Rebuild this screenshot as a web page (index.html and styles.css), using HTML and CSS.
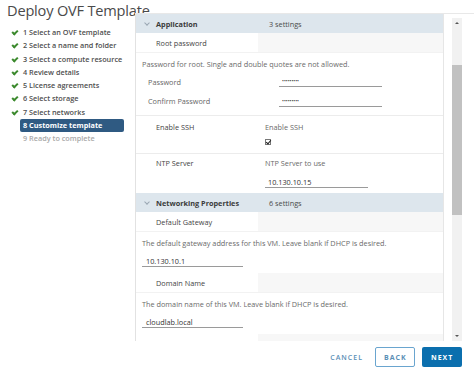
FILE: index.html
```html
<!DOCTYPE html>
<html lang="en">
<head>
  <meta charset="UTF-8">
  <link rel="stylesheet" href="styles.css">
</head>
<body>
  <div class="wizard">
    <div class="main">
      <div class="side">
        <h1 class="title">Deploy OVF Template</h1>
        <ul class="steps">
          <li class="step done"><span class="tick"></span>1 Select an OVF template</li>
          <li class="step done"><span class="tick"></span>2 Select a name and folder</li>
          <li class="step done"><span class="tick"></span>3 Select a compute resource</li>
          <li class="step done"><span class="tick"></span>4 Review details</li>
          <li class="step done"><span class="tick"></span>5 License agreements</li>
          <li class="step done"><span class="tick"></span>6 Select storage</li>
          <li class="step done"><span class="tick"></span>7 Select networks</li>
          <li class="step active">8 Customize template</li>
          <li class="step todo">9 Ready to complete</li>
        </ul>
      </div>
      <div class="panel">
        <div class="props">
          <div class="group">
            <span class="chev"></span>
            <span class="group-name">Application</span>
            <span class="group-count">3 settings</span>
          </div>
          <div class="prop-head">
            <span class="prop-name">Root password</span>
            <span class="prop-side"></span>
          </div>
          <p class="desc">Password for root. Single and double quotes are not allowed.</p>
          <div class="pw-row">
            <span class="pw-label">Password</span>
            <span class="field pw">•••••••••</span>
          </div>
          <div class="pw-row last">
            <span class="pw-label">Confirm Password</span>
            <span class="field pw">•••••••••</span>
          </div>

          <div class="prop ssh">
            <span class="prop-name">Enable SSH</span>
            <div class="prop-side">
              <div class="side-text">Enable SSH</div>
              <span class="check"></span>
            </div>
          </div>
          <div class="prop ntp">
            <span class="prop-name">NTP Server</span>
            <div class="prop-side">
              <div class="side-text">NTP Server to use</div>
              <span class="field">10.130.10.15</span>
            </div>
          </div>

          <div class="group">
            <span class="chev"></span>
            <span class="group-name">Networking Properties</span>
            <span class="group-count">6 settings</span>
          </div>
          <div class="prop-head">
            <span class="prop-name">Default Gateway</span>
            <span class="prop-side"></span>
          </div>
          <p class="desc">The default gateway address for this VM. Leave blank if DHCP is desired.</p>
          <div class="value-row"><span class="field">10.130.10.1</span></div>
          <div class="prop-head">
            <span class="prop-name">Domain Name</span>
            <span class="prop-side"></span>
          </div>
          <p class="desc">The domain name of this VM. Leave blank if DHCP is desired.</p>
          <div class="value-row"><span class="field">cloudlab.local</span></div>
          <div class="prop-head">
            <span class="prop-name">Domain Search Path</span>
            <span class="prop-side"></span>
          </div>
        </div>
        <div class="scrollbar">
          <span class="arrow up"></span>
          <div class="track"><div class="thumb"></div></div>
          <span class="arrow down"></span>
        </div>
      </div>
    </div>
    <div class="footer">
      <button class="btn link">CANCEL</button>
      <button class="btn outline">BACK</button>
      <button class="btn primary">NEXT</button>
    </div>
  </div>
</body>
</html>
```

FILE: styles.css
```css
* {
  margin: 0;
  padding: 0;
  box-sizing: border-box;
}
html, body {
  height: 100%;
  background-color: #fff;
}
body {
  font-family: "Open Sans", "Liberation Sans", sans-serif;
  font-size: 7.3px;
  color: #565656;
}
.wizard {
  height: 377px;
  display: flex;
  flex-direction: column;
}
.main {
  display: flex;
  height: 341px;
}
/* left column: title and steps */
.side {
  width: 135px;
}
.title {
  height: 26px;
  padding: 1px 0 0 7px;
  font-size: 14.6px;
  font-weight: 400;
  line-height: 18px;
  letter-spacing: -0.2px;
  color: #4a4a4a;
  white-space: nowrap;
}
.steps {
  list-style: none;
}
.step {
  position: relative;
  height: 13.3px;
  line-height: 13.3px;
  padding-left: 23px;
  font-weight: 600;
  color: #4f4f4f;
  white-space: nowrap;
}
.tick {
  position: absolute;
  left: 12px;
  top: 4px;
  width: 6px;
  height: 4px;
  border-left: 2px solid #3c8a2e;
  border-bottom: 2px solid #3c8a2e;
  transform: rotate(-45deg);
}
.step.active {
  margin-left: 20px;
  margin-right: 11px;
  padding-left: 3px;
  border-radius: 2px;
  background-color: #2f5a82;
  color: #fff;
  font-weight: 700;
}
.step.todo {
  color: #a9a9a9;
}
/* property panel */
.panel {
  flex: 1;
  display: flex;
  margin-top: 13px;
  border-left: 1px solid #e2e2e2;
  border-top: 1px solid #e8e8e8;
  overflow: hidden;
}
.props {
  width: 308px;
  border-right: 1px solid #e6e6e6;
}
.group {
  display: flex;
  align-items: center;
  height: 19px;
  background-color: #dde6ed;
  color: #3b3b3b;
}
.chev {
  width: 4px;
  height: 4px;
  margin: 0 7px 2px 9px;
  border-right: 1px solid #9aa7b2;
  border-bottom: 1px solid #9aa7b2;
  transform: rotate(45deg);
}
.group-name {
  width: 113px;
  font-weight: 700;
}
.group-count {
  color: #4a4a4a;
}
.prop-head {
  display: flex;
  height: 20px;
  align-items: center;
  border-bottom: 1px solid #f2f2f2;
}
.prop-name {
  width: 122px;
  padding-left: 20px;
  color: #444;
  font-weight: 500;
  align-self: flex-start;
}
.prop-head .prop-name {
  align-self: center;
}
.prop-head .prop-side {
  flex: 1;
  height: 100%;
  background-color: #f7f7f7;
}
.desc {
  height: 19px;
  padding: 6px 0 0 6px;
  color: #6a6a6a;
  white-space: nowrap;
}
.pw-row {
  display: flex;
  align-items: center;
  height: 19.5px;
  padding-left: 12px;
}
.pw-row.last {
  margin-bottom: 4px;
}
.pw-label {
  width: 131px;
  color: #666;
}
.field {
  display: inline-block;
  width: 103px;
  height: 11px;
  padding-left: 3px;
  line-height: 10px;
  border-bottom: 1px solid #9a9a9a;
  color: #333;
}
.pw {
  font-size: 5px;
}
.prop {
  display: flex;
  border-top: 1px solid #ececec;
}
.prop.ssh {
  height: 38px;
  padding-top: 6px;
}
.prop.ntp {
  height: 40px;
  padding-top: 4px;
}
.prop-side {
  padding-left: 7px;
}
.side-text {
  height: 12px;
  line-height: 10px;
  color: #6a6a6a;
}
.check {
  display: block;
  position: relative;
  width: 6px;
  height: 6px;
  margin-top: 5px;
  border: 1px solid #777;
  background-color: #fff;
}
.check::after {
  content: '';
  position: absolute;
  left: 1px;
  top: -1px;
  width: 2px;
  height: 4px;
  border-right: 1.5px solid #222;
  border-bottom: 1.5px solid #222;
  transform: rotate(40deg);
}
.prop .field {
  margin-top: 7px;
}
.value-row {
  height: 22px;
  padding: 5px 0 0 6px;
}
.value-row .field {
  width: 101px;
  padding-left: 4px;
}
/* fake scrollbar */
.scrollbar {
  width: 10px;
  margin: 4px 0 0 8px;
  display: flex;
  flex-direction: column;
  background-color: #f1f1f1;
}
.arrow {
  display: block;
  position: relative;
  height: 10px;
}
.arrow::after {
  content: '';
  position: absolute;
  top: 4px;
  left: 3px;
  border-left: 2px solid transparent;
  border-right: 2px solid transparent;
}
.arrow.up::after {
  border-bottom: 2px solid #555;
}
.arrow.down::after {
  border-top: 2px solid #555;
}
.track {
  flex: 1;
  padding-top: 37px;
}
.thumb {
  height: 150px;
  background-color: #c1c1c1;
}
/* footer buttons */
.footer {
  display: flex;
  justify-content: flex-end;
  align-items: center;
  gap: 7px;
  padding: 6px 12px 0 0;
}
.btn {
  height: 20px;
  padding: 0 8px;
  border: 1px solid transparent;
  border-radius: 2px;
  background: none;
  font-family: "Open Sans", "Liberation Sans", sans-serif;
  font-size: 7px;
  font-weight: 700;
  letter-spacing: 1px;
}
.btn.link {
  padding: 0 4px;
  color: #5a8fb6;
  font-weight: 600;
}
.btn.outline {
  width: 40px;
  border-color: #6aa5cf;
  color: #5a8fb6;
}
.btn.primary {
  width: 40px;
  background-color: #0b6fae;
  color: #fff;
}
```
